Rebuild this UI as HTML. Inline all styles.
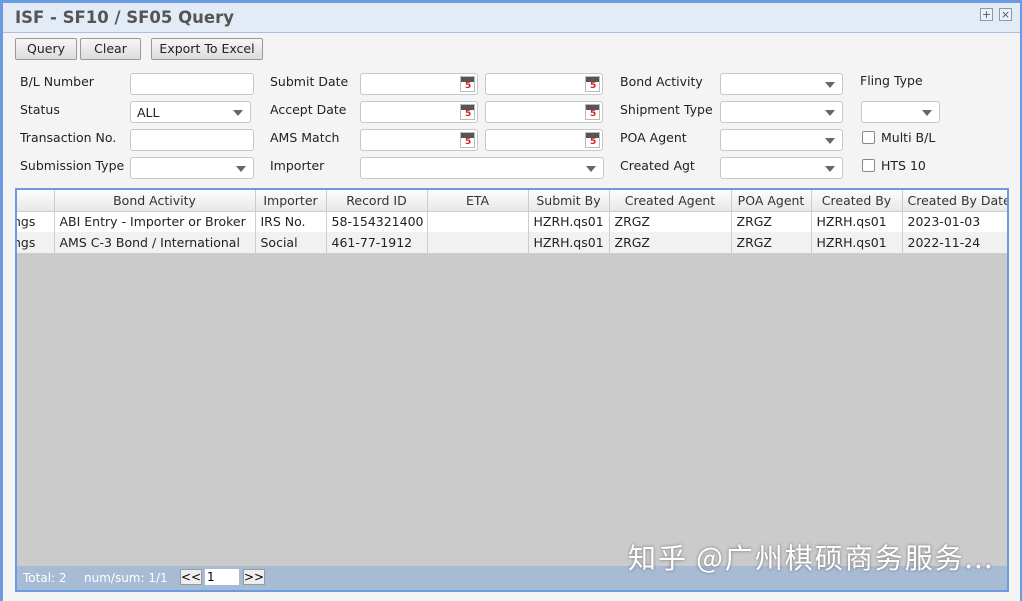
<!DOCTYPE html>
<html><head><meta charset="utf-8"><style>
*{box-sizing:border-box;margin:0;padding:0}
body{width:1022px;height:601px;background:#f4f4f4;font-family:"DejaVu Sans","Liberation Sans",sans-serif;font-size:12.5px;color:#222;position:relative;overflow:hidden}
.abs{position:absolute}
#lb{left:0;top:0;width:3px;height:601px;background:#6b9be0}
#tb{left:0;top:0;width:1022px;height:3px;background:#6b9be0}
#rb{right:0;top:0;width:2px;height:601px;background:#6b9be0}
#title{left:3px;top:3px;width:1017px;height:30px;background:#e3ebf6;border-bottom:1px solid #a9bfdc}
#title span{position:absolute;left:12px;top:5px;font-size:16.5px;font-weight:bold;color:#555}
.ib{width:13px;height:13px;border:1px solid #8a99ac;background:#eef2f8;top:8px;font-size:11px;line-height:11px;text-align:center;color:#556}
.btn{height:22px;top:38px;border:1px solid #999;background:linear-gradient(#f6f6f6,#dcdcdc);border-radius:2px;text-align:center;line-height:20px;font-size:12.5px}
.lbl{font-size:12.5px}
.inp{height:22px;background:#fff;border:1px solid #c8c8c8;border-radius:3px}
.sel{height:22px;background:#fff;border:1px solid #c8c8c8;border-radius:3px}
.sel:after{content:"";position:absolute;right:7px;top:8px;border-left:5px solid transparent;border-right:5px solid transparent;border-top:6px solid #666}
.cal{position:absolute;right:2px;top:2px;width:15px;height:16px;background:#fff;border:1px solid #bbb}
.cal:before{content:"";position:absolute;left:0;top:0;width:13px;height:5px;background:#555}
.cal:after{content:"5";position:absolute;left:4px;top:4px;font-size:9px;font-weight:bold;color:#c22}
.cb{width:13px;height:13px;border:1px solid #888;border-radius:2px;background:#fff}
#grid{left:15px;top:188px;width:994px;height:404px;border:2px solid #6b9be0;background:#cbcbcb;overflow:hidden}
table{border-collapse:collapse;position:absolute;left:0;top:0;font-size:12.5px;table-layout:fixed;width:1006px}
td,th{height:21px;white-space:nowrap;overflow:hidden;padding:0 5px;border-right:1px solid #ccc}
th{font-weight:normal;background:linear-gradient(#fdfdfd,#e8e8e8);text-align:center;border-bottom:1px solid #ccc;color:#333}
tr.r1 td{background:#fff}
tr.r2 td{background:#f1f1f1}
#foot{left:0;top:376px;width:990px;height:24px;background:#a8bbd4;color:#fff;font-size:12px}
</style></head><body>
<div class="abs" id="tb"></div><div class="abs" id="lb"></div><div class="abs" id="rb"></div>
<div class="abs" id="title"><span>ISF - SF10 / SF05 Query</span></div>
<div class="abs ib" style="left:980px">+</div><div class="abs ib" style="left:999px">×</div>
<div class="abs btn" style="left:15px;width:62px">Query</div>
<div class="abs btn" style="left:80px;width:61px">Clear</div>
<div class="abs btn" style="left:151px;width:112px">Export To Excel</div>

<div class="abs lbl" style="left:20px;top:74px">B/L Number</div>
<div class="abs lbl" style="left:20px;top:102px">Status</div>
<div class="abs lbl" style="left:20px;top:130px">Transaction No.</div>
<div class="abs lbl" style="left:20px;top:158px">Submission Type</div>
<div class="abs inp" style="left:130px;top:73px;width:124px"></div>
<div class="abs sel" style="left:130px;top:101px;width:121px"><span style="position:absolute;left:6px;top:3px">ALL</span></div>
<div class="abs inp" style="left:130px;top:129px;width:124px"></div>
<div class="abs sel" style="left:130px;top:157px;width:124px"></div>

<div class="abs lbl" style="left:270px;top:74px">Submit Date</div>
<div class="abs lbl" style="left:270px;top:102px">Accept Date</div>
<div class="abs lbl" style="left:270px;top:130px">AMS Match</div>
<div class="abs lbl" style="left:270px;top:158px">Importer</div>
<div class="abs inp" style="left:360px;top:73px;width:118px"><div class="cal"></div></div>
<div class="abs inp" style="left:485px;top:73px;width:118px"><div class="cal"></div></div>
<div class="abs inp" style="left:360px;top:101px;width:118px"><div class="cal"></div></div>
<div class="abs inp" style="left:485px;top:101px;width:118px"><div class="cal"></div></div>
<div class="abs inp" style="left:360px;top:129px;width:118px"><div class="cal"></div></div>
<div class="abs inp" style="left:485px;top:129px;width:118px"><div class="cal"></div></div>
<div class="abs sel" style="left:360px;top:157px;width:244px"></div>

<div class="abs lbl" style="left:620px;top:74px">Bond Activity</div>
<div class="abs lbl" style="left:620px;top:102px">Shipment Type</div>
<div class="abs lbl" style="left:620px;top:130px">POA Agent</div>
<div class="abs lbl" style="left:620px;top:158px">Created Agt</div>
<div class="abs sel" style="left:720px;top:73px;width:123px"></div>
<div class="abs sel" style="left:720px;top:101px;width:123px"></div>
<div class="abs sel" style="left:720px;top:129px;width:123px"></div>
<div class="abs sel" style="left:720px;top:157px;width:123px"></div>

<div class="abs lbl" style="left:860px;top:73px">Fling Type</div>
<div class="abs sel" style="left:861px;top:101px;width:79px"></div>
<div class="abs cb" style="left:862px;top:131px"></div><div class="abs lbl" style="left:881px;top:130px">Multi B/L</div>
<div class="abs cb" style="left:862px;top:159px"></div><div class="abs lbl" style="left:881px;top:158px">HTS 10</div>

<div class="abs" id="grid">
<table style="left:-1px">
<colgroup><col style="width:38px"><col style="width:201px"><col style="width:71px"><col style="width:101px"><col style="width:101px"><col style="width:81px"><col style="width:122px"><col style="width:80px"><col style="width:91px"><col style="width:120px"></colgroup>
<tr><th></th><th>Bond Activity</th><th>Importer</th><th>Record ID</th><th>ETA</th><th>Submit By</th><th>Created Agent</th><th>POA Agent</th><th>Created By</th><th style="text-align:left">Created By Date</th></tr>
<tr class="r1"><td style="padding:0;text-indent:-3px">ngs</td><td>ABI Entry - Importer or Broker</td><td>IRS No.</td><td>58-154321400</td><td></td><td>HZRH.qs01</td><td>ZRGZ</td><td>ZRGZ</td><td>HZRH.qs01</td><td>2023-01-03</td></tr>
<tr class="r2"><td style="padding:0;text-indent:-3px">ngs</td><td>AMS C-3 Bond / International</td><td>Social</td><td>461-77-1912</td><td></td><td>HZRH.qs01</td><td>ZRGZ</td><td>ZRGZ</td><td>HZRH.qs01</td><td>2022-11-24</td></tr>
</table>
<div class="abs" id="foot">
<span class="abs" style="left:6px;top:5px">Total: 2</span>
<span class="abs" style="left:67px;top:5px">num/sum: 1/1</span>
<span class="abs" style="left:163px;top:3px;width:22px;height:16px;background:#eee;border:1px solid #999;color:#000;text-align:center;line-height:14px">&lt;&lt;</span>
<span class="abs" style="left:188px;top:3px;width:34px;height:16px;background:#fff;color:#000;padding-left:2px;line-height:16px">1</span>
<span class="abs" style="left:226px;top:3px;width:22px;height:16px;background:#eee;border:1px solid #999;color:#000;text-align:center;line-height:14px">&gt;&gt;</span>
</div>
</div>
<div class="abs" style="left:628px;top:537px;font-size:28px;letter-spacing:2px;color:#fff;font-family:'Noto Sans CJK SC',sans-serif;text-shadow:0 0 3px rgba(0,0,0,.45);white-space:nowrap">知乎 @广州棋硕商务服务...</div>
</body></html>
